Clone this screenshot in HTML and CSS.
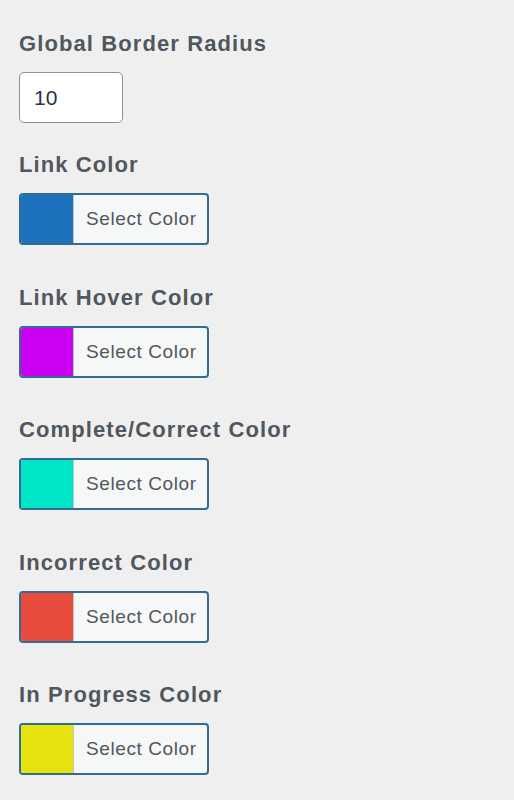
FILE: index.html
```html
<!DOCTYPE html>
<html>
<head>
<meta charset="utf-8">
<link rel="stylesheet" href="styles.css">
</head>
<body>
<div class="panel">
  <div class="field first">
    <h3 class="label">Global Border Radius</h3>
    <input class="num" type="text" value="10">
  </div>
  <div class="field">
    <h3 class="label">Link Color</h3>
    <button class="color-btn"><span class="swatch" style="background:#1e72bd"></span><span class="txt">Select Color</span></button>
  </div>
  <div class="field">
    <h3 class="label">Link Hover Color</h3>
    <button class="color-btn"><span class="swatch" style="background:#cc00f2"></span><span class="txt">Select Color</span></button>
  </div>
  <div class="field">
    <h3 class="label">Complete/Correct Color</h3>
    <button class="color-btn"><span class="swatch" style="background:#00e4c8"></span><span class="txt">Select Color</span></button>
  </div>
  <div class="field">
    <h3 class="label">Incorrect Color</h3>
    <button class="color-btn"><span class="swatch" style="background:#e84c3d"></span><span class="txt">Select Color</span></button>
  </div>
  <div class="field">
    <h3 class="label">In Progress Color</h3>
    <button class="color-btn"><span class="swatch" style="background:#e5e20f"></span><span class="txt">Select Color</span></button>
  </div>
</div>
</body>
</html>
```
FILE: styles.css
```css
html, body {
  margin: 0;
  padding: 0;
  background: #efeff0;
  font-family: "Liberation Sans", Arial, sans-serif;
  color: #50575e;
}
.panel {
  padding: 32px 0 0 19px;
}
.field {
  margin-top: 40.5px;
}
.field.first {
  margin-top: 0;
}
.first + .field {
  margin-top: 30px;
}
.label {
  margin: 0 0 16px 0;
  font-size: 22px;
  line-height: 24px;
  font-weight: 700;
  letter-spacing: 1.1px;
  color: #50575e;
}
.num {
  display: block;
  box-sizing: border-box;
  width: 104px;
  height: 51px;
  border: 1px solid #8c8f94;
  border-radius: 5px;
  background: #fff;
  padding: 0 14px;
  font-family: "Liberation Sans", Arial, sans-serif;
  font-size: 21px;
  color: #2c3338;
}
.color-btn {
  display: flex;
  align-items: stretch;
  box-sizing: border-box;
  width: 190px;
  height: 52px;
  padding: 0;
  border: 2px solid #2f6d93;
  border-radius: 4px;
  background: #f6f7f7;
  overflow: hidden;
  cursor: pointer;
  font-family: "Liberation Sans", Arial, sans-serif;
}
.swatch {
  width: 52px;
  flex: none;
  border-right: 1px solid #c3c4c7;
}
.txt {
  flex: 1;
  display: flex;
  align-items: center;
  padding-left: 12px;
  font-size: 19px;
  letter-spacing: 0.6px;
  color: #50575e;
}
```
